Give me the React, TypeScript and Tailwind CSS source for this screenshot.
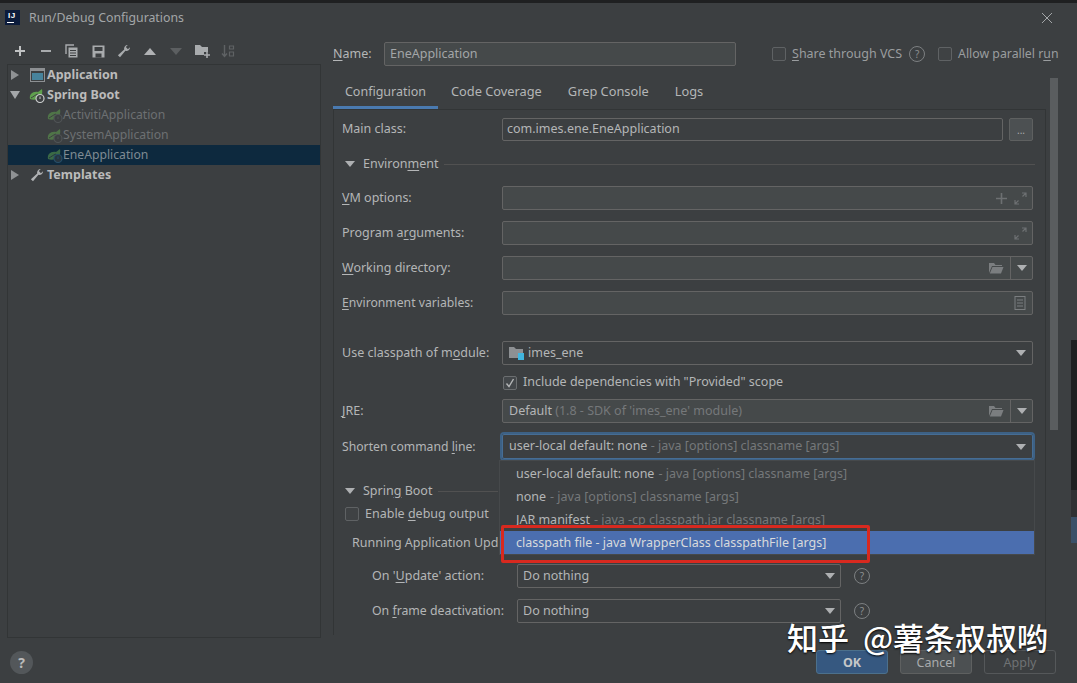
import React from "react";

const FONT = "font-['Noto_Sans','Liberation_Sans',sans-serif]";

function Help({ className = "" }: { className?: string }) {
  return (
    <span className={"flex h-[16px] w-[16px] shrink-0 items-center justify-center rounded-full border border-[#7d8082] text-[10px] text-[#8c8f91] " + className}>?</span>
  );
}

function Caret({ dim = false }: { dim?: boolean }) {
  return (
    <svg width="10" height="6" viewBox="0 0 10 6" className="shrink-0">
      <path d="M0 0H10L5 6Z" fill={dim ? "#8a8d8f" : "#aeb0b2"} />
    </svg>
  );
}

function Folder() {
  return (
    <svg width="16" height="14" viewBox="0 0 16 14" className="shrink-0">
      <path d="M1 2H6L7.5 4H14V5H4L1 12Z" fill="#7b7e80" />
      <path d="M4.5 6H15.5L13 12.5H1.8Z" fill="#7b7e80" />
    </svg>
  );
}

function Expand({ dim = false }: { dim?: boolean }) {
  return (
    <svg width="13" height="13" viewBox="0 0 13 13" className="shrink-0">
      <path d="M8 1H12V5M12 1L8.5 4.5M5 12H1V8M1 12L4.5 8.5" stroke={dim ? "#6d7072" : "#7b7e80"} strokeWidth="1.2" fill="none" />
    </svg>
  );
}

function Spring({ badge = "#5f6466", dim = false }: { badge?: string; dim?: boolean }) {
  return (
    <svg width="16" height="15" viewBox="0 0 16 15" className="shrink-0" style={{ opacity: dim ? 0.55 : 1 }}>
      <path d="M1 11C0 6 4 3 9 4L13 1C14 6 12 10 9 11C6 12 3 12 1 11Z" fill="#5fa04e" />
      <path d="M2 10C4 9 6 7 9 6" stroke="#3c3f41" strokeWidth="1" fill="none" />
      <circle cx="11" cy="10.5" r="4" fill="#3c3f41" stroke={dim ? badge : "#c8cacb"} strokeWidth="1.2" />
      <path d="M11 8.5V11" stroke={dim ? badge : "#c8cacb"} strokeWidth="1" />
    </svg>
  );
}

function Field({ w = "w-[531px]", h = "h-[24px]", bg = "bg-[#45494a]", children }: { w?: string; h?: string; bg?: string; children?: React.ReactNode }) {
  return (
    <div className={`${w} ${h} ${bg} flex shrink-0 items-center rounded-[2px] border border-[#646464]`}>
      {children}
    </div>
  );
}

function Row({ label, mt, children }: { label: React.ReactNode; mt: string; children: React.ReactNode }) {
  return (
    <div className={`flex items-center ${mt}`}>
      <div className="w-[160px] shrink-0">{label}</div>
      {children}
    </div>
  );
}

function DropSplit() {
  return (
    <>
      <span className="ml-auto mr-[6px] flex"><Folder /></span>
      <span className="flex h-full w-[22px] items-center justify-center border-l border-[#646464]"><Caret /></span>
    </>
  );
}

function Section({ title, mt, lineW }: { title: React.ReactNode; mt: string; lineW: string }) {
  return (
    <div className={`flex h-[16px] items-center pl-[3px] ${mt}`}>
      <Caret />
      <span className="ml-[8px]">{title}</span>
      <span className={`ml-[6px] h-px bg-[#515151] ${lineW}`} />
    </div>
  );
}

function ToolIcon({ children }: { children: React.ReactNode }) {
  return <span className="flex h-[20px] w-[26px] items-center justify-center">{children}</span>;
}

function TreeRow({ icon, text, arrow, bold, selected, indent, color }: { icon: React.ReactNode; text: string; arrow?: "r" | "d"; bold?: boolean; selected?: boolean; indent?: boolean; color?: string }) {
  return (
    <div className={`flex h-[20px] items-center ${selected ? "bg-[#0d293e]" : ""} ${indent ? "pl-[39px] text-[12.2px]" : "pl-[2px]"}`}>
      {arrow === "r" && (
        <svg width="10" height="10" viewBox="0 0 10 10" className="mr-[9px] shrink-0"><path d="M1 0L9 5L1 10Z" fill="#8f9294" /></svg>
      )}
      {arrow === "d" && (
        <svg width="10" height="10" viewBox="0 0 10 10" className="mr-[9px] shrink-0"><path d="M0 1H10L5 9Z" fill="#a4a7a9" /></svg>
      )}
      <span className="flex w-[16px] shrink-0 items-center justify-center">{icon}</span>
      <span className={`${indent ? "" : "ml-[2px]"} ${bold ? "font-bold text-[#bbbbbb]" : ""} ${color ?? ""}`}>{text}</span>
    </div>
  );
}

export default function App() {
  return (
    <div className={`relative flex h-[683px] w-[1077px] flex-col overflow-hidden bg-[#3c3f41] text-[12.5px] leading-[16px] text-[#b4b6b7] ${FONT}`}>
      <div className="h-[3px] shrink-0 bg-[#1f2021]" />

      {/* title bar */}
      <div className="flex h-[31px] shrink-0 items-center pb-[2px] pl-[5px] pr-[24px]">
        <div className="relative flex h-[15px] w-[15px] items-start justify-start bg-[#0c1c3c] pl-[3px] pt-[1px] font-['Liberation_Sans',sans-serif] text-[8px] font-bold leading-[9px] tracking-[0.5px] text-white">
          IJ
          <span className="absolute bottom-[2px] left-[2px] h-px w-[7px] bg-white" />
        </div>
        <span className="ml-[9px] text-[12.3px] text-[#a3a6a8]">Run/Debug Configurations</span>
        <svg width="12" height="12" viewBox="0 0 12 12" className="ml-auto">
          <path d="M1 1L11 11M11 1L1 11" stroke="#a3a6a8" strokeWidth="1" />
        </svg>
      </div>

      <div className="flex min-h-0 flex-1">
        {/* left column */}
        <div className="flex w-[333px] shrink-0 flex-col pl-[7px] pr-[12px]">
          <div className="-mr-[4px] flex h-[30px] items-start pt-[7px]">
            <ToolIcon><svg width="12" height="12" viewBox="0 0 12 12"><path d="M6 1V11M1 6H11" stroke="#c0c2c3" strokeWidth="2" /></svg></ToolIcon>
            <ToolIcon><svg width="12" height="12" viewBox="0 0 12 12"><path d="M1 6H11" stroke="#a8abad" strokeWidth="2" /></svg></ToolIcon>
            <ToolIcon>
              <svg width="14" height="14" viewBox="0 0 14 14"><path d="M1 10V1H9" stroke="#a8abad" strokeWidth="1.4" fill="none" /><rect x="3.5" y="3.5" width="9" height="10" fill="#a8abad" /><path d="M5 6.5H11M5 9H11M5 11.5H11" stroke="#3c3f41" strokeWidth="1" /></svg>
            </ToolIcon>
            <ToolIcon>
              <svg width="13" height="13" viewBox="0 0 13 13"><path d="M0.5 0.5H12.5V12.5H0.5Z" fill="#a8abad" /><rect x="2.5" y="2" width="8" height="4" fill="#3c3f41" /><rect x="3.5" y="8.5" width="6" height="4" fill="#3c3f41" /></svg>
            </ToolIcon>
            <ToolIcon>
              <svg width="14" height="14" viewBox="0 0 14 14"><path d="M13 3.2A3.6 3.6 0 0 1 8.4 6.8L3 13.2L0.9 11.2L7.2 5.6A3.6 3.6 0 0 1 10.8 1L8.8 3.1L10.9 5.2Z" fill="#a8abad" /></svg>
            </ToolIcon>
            <ToolIcon><svg width="12" height="7" viewBox="0 0 12 7"><path d="M0 7L6 0L12 7Z" fill="#b0b2b4" /></svg></ToolIcon>
            <ToolIcon><svg width="12" height="7" viewBox="0 0 12 7"><path d="M0 0L6 7L12 0Z" fill="#5c5f61" /></svg></ToolIcon>
            <ToolIcon>
              <svg width="15" height="14" viewBox="0 0 15 14"><path d="M0 1H5L7 3H13V8H9V11H0Z" fill="#a8abad" /><path d="M12 8V14M9 11H15" stroke="#a8abad" strokeWidth="1.6" /></svg>
            </ToolIcon>
            <ToolIcon>
              <svg width="14" height="14" viewBox="0 0 14 14"><path d="M3.5 1V12M1 9.5L3.5 12.5L6 9.5" stroke="#5f6264" strokeWidth="1.4" fill="none" /><path d="M8.5 2H12.5V5H8.5ZM8.5 8H12.5V12H8.5Z" stroke="#5f6264" strokeWidth="1.2" fill="none" /></svg>
            </ToolIcon>
          </div>
          <div className="min-h-0 flex-1 border border-[#323536]">
            <TreeRow arrow="r" bold text="Application" icon={
              <svg width="15" height="14" viewBox="0 0 15 14"><rect x="0.5" y="0.5" width="14" height="13" fill="none" stroke="#8d9093" /><rect x="0.5" y="0.5" width="14" height="2.5" fill="#8d9093" /><rect x="2" y="5" width="11" height="7" fill="#47839c" /></svg>
            } />
            <TreeRow arrow="d" bold text="Spring Boot" icon={<Spring />} />
            <TreeRow indent text="ActivitiApplication" color="text-[#6d7072]" icon={<Spring dim />} />
            <TreeRow indent text="SystemApplication" color="text-[#6d7072]" icon={<Spring dim />} />
            <TreeRow indent selected text="EneApplication" color="text-[#7f8b93]" icon={<Spring dim badge="#3a6a88" />} />
            <TreeRow arrow="r" bold text="Templates" icon={
              <svg width="14" height="14" viewBox="0 0 14 14"><path d="M13 3.2A3.6 3.6 0 0 1 8.4 6.8L3 13.2L0.9 11.2L7.2 5.6A3.6 3.6 0 0 1 10.8 1L8.8 3.1L10.9 5.2Z" fill="#b0b2b4" /></svg>
            } />
          </div>
        </div>

        {/* right column */}
        <div className="flex w-[727px] shrink-0 flex-col pt-[8px]">
          <div className="flex h-[24px] items-center">
            <span className="w-[51px] shrink-0"><u className="underline-offset-2">N</u>ame:</span>
            <Field w="w-[352px]"><span className="pl-[5px] text-[#a3a6a8]">EneApplication</span></Field>
            <span className="ml-[36px] h-[14px] w-[14px] shrink-0 rounded-[2px] border border-[#5f6264] bg-[#3f4244]" />
            <span className="ml-[6px] whitespace-nowrap text-[#9a9d9f]"><u className="underline-offset-2">S</u>hare through VCS</span>
            <Help className="ml-[7px]" />
            <span className="ml-[13px] h-[14px] w-[14px] shrink-0 rounded-[2px] border border-[#5f6264] bg-[#3f4244]" />
            <span className="ml-[6px] whitespace-nowrap text-[12.3px] text-[#9a9d9f]">Allow parallel r<u className="underline-offset-2">u</u>n</span>
          </div>

          <div className="mt-[12px] flex min-h-0 flex-1">
            <div className="flex w-[713px] shrink-0 flex-col">
              <div className="flex h-[31px] shrink-0 items-start">
                <div className="flex h-[31px] w-[105px] items-start justify-center border-b-[3px] border-[#4a7ab0] pt-[6px]">Configuration</div>
                <span className="ml-[13px] pt-[5px] text-[12.8px]">Code Coverage</span>
                <span className="ml-[26px] pt-[5px] text-[12.8px]">Grep Console</span>
                <span className="ml-[26px] pt-[5px] text-[12.8px]">Logs</span>
              </div>
              <div className="relative mb-[3px] flex-1 border-x border-t border-[#323536] pl-[8px] pt-[8px]">
                <Row mt="" label={<span className="-mt-[1px] block">Main class:</span>}>
                  <Field w="w-[501px]" h="h-[23px]" bg="bg-[#3c3f41]"><span className="-mt-[1px] pl-[4px]">com.imes.ene.EneApplication</span></Field>
                  <span className="ml-[6px] flex h-[23px] w-[24px] items-center justify-center rounded-[2px] border border-[#5e6060] bg-[#4c5052] text-[10px] text-[#a8abad]">...</span>
                </Row>

                <Section mt="mt-[15px]" lineW="w-[591px]" title={<>Environ<u className="underline-offset-2">m</u>ent</>} />

                <Row mt="mt-[14px]" label={<><u className="underline-offset-2">V</u>M options:</>}>
                  <Field>
                    <svg width="11" height="11" viewBox="0 0 11 11" className="ml-auto"><path d="M5.5 0V11M0 5.5H11" stroke="#6d7072" strokeWidth="1.6" /></svg>
                    <span className="ml-[7px] mr-[5px] flex"><Expand dim /></span>
                  </Field>
                </Row>
                <Row mt="mt-[11px]" label={<>Program a<u className="underline-offset-2">r</u>guments:</>}>
                  <Field><span className="ml-auto mr-[5px] flex"><Expand dim /></span></Field>
                </Row>
                <Row mt="mt-[11px]" label={<><u className="underline-offset-2">W</u>orking directory:</>}>
                  <Field><DropSplit /></Field>
                </Row>
                <Row mt="mt-[11px]" label={<span className="text-[12.2px]"><u className="underline-offset-2">E</u>nvironment variables:</span>}>
                  <Field>
                    <svg width="12" height="14" viewBox="0 0 12 14" className="ml-auto mr-[6px]"><rect x="1" y="0.5" width="10" height="13" fill="none" stroke="#7b7e80" /><path d="M3 4H9M3 7H9M3 10H9" stroke="#7b7e80" /></svg>
                  </Field>
                </Row>
                <Row mt="mt-[26px]" label={<>Use classpath of m<u className="underline-offset-2">o</u>dule:</>}>
                  <Field bg="bg-[#3c3f41]">
                    <span className="relative ml-[6px] flex">
                      <svg width="15" height="14" viewBox="0 0 15 14"><path d="M0 1H5L7 3H14V12H0Z" fill="#8d9093" /><rect x="9" y="7" width="6" height="7" fill="#40b6e0" /></svg>
                    </span>
                    <span className="ml-[4px]">imes_ene</span>
                    <span className="ml-auto mr-[6px] flex"><Caret /></span>
                  </Field>
                </Row>
                <div className="mt-[11px] flex h-[14px] items-center pl-[161px]">
                  <span className="flex h-[14px] w-[14px] items-center justify-center rounded-[2px] border border-[#6b6e70] bg-[#43474a]">
                    <svg width="10" height="10" viewBox="0 0 10 10"><path d="M1.5 5.5L4 8.5L8.5 1" stroke="#b4b6b7" strokeWidth="1.4" fill="none" /></svg>
                  </span>
                  <span className="-mt-[2px] ml-[6px] whitespace-nowrap">Include dependencies with "Provided" scope</span>
                </div>
                <Row mt="mt-[9px]" label={<><u className="underline-offset-2">J</u>RE:</>}>
                  <Field>
                    <span className="pl-[6px]">Default <span className="text-[#75787a]">(1.8 - SDK of 'imes_ene' module)</span></span>
                    <DropSplit />
                  </Field>
                </Row>
                <Row mt="mt-[11px]" label={<span className="text-[12.2px]">Shorten command <u className="underline-offset-2">l</u>ine:</span>}>
                  <div className="flex h-[25px] w-[531px] items-center rounded-[2px] border border-[#466d94] bg-[#3c3f41] pb-[2px] pl-[6px] outline-2 outline-[#3d6185]">
                    <span>user-local default: none <span className="text-[#75787a]">- java [options] classname [args]</span></span>
                    <span className="ml-auto mr-[6px] mt-[2px] flex"><Caret /></span>
                  </div>
                </Row>

                <Section mt="mt-[24px]" lineW="w-[60px]" title={<>Sprin<u className="underline-offset-2">g</u> Boot</>} />

                <div className="mt-[8px] flex h-[14px] items-center pl-[3px]">
                  <span className="h-[14px] w-[14px] rounded-[2px] border border-[#5f6264] bg-[#3f4244]" />
                  <span className="ml-[6px] whitespace-nowrap">Enable <u className="underline-offset-2">d</u>ebug output</span>
                </div>
                <div className="mt-[14px] h-[16px] pl-[10px]">Running Application Upd</div>
                <div className="mt-[13px] flex items-center pl-[30px]">
                  <span className="w-[145px] shrink-0">On '<u className="underline-offset-2">U</u>pdate' action:</span>
                  <div className="flex h-[24px] w-[324px] items-center rounded-[2px] border border-[#646464] pl-[5px]">Do nothing<span className="ml-auto mr-[5px] flex"><Caret /></span></div>
                  <Help className="ml-[13px]" />
                </div>
                <div className="mt-[11px] flex items-center pl-[30px]">
                  <span className="w-[145px] shrink-0 text-[12.3px]">On <u className="underline-offset-2">f</u>rame deactivation:</span>
                  <div className="flex h-[24px] w-[324px] items-center rounded-[2px] border border-[#646464] pl-[5px]">Do nothing<span className="ml-auto mr-[5px] flex"><Caret /></span></div>
                  <Help className="ml-[13px]" />
                </div>

                {/* popup */}
                <div className="absolute left-[165px] top-[350px] w-[536px] border border-[#46494b] bg-[#3c3f41] pt-[1px]">
                  <div className="flex h-[23px] items-center pl-[16px]">user-local default: none <span className="ml-[4px] text-[#75787a]">- java [options] classname [args]</span></div>
                  <div className="flex h-[23px] items-center pl-[16px]">none <span className="ml-[4px] text-[#75787a]">- java [options] classname [args]</span></div>
                  <div className="flex h-[23px] items-center pl-[16px]">JAR manifest <span className="ml-[4px] text-[#75787a]">- java -cp classpath.jar classname [args]</span></div>
                  <div className="flex h-[23px] items-center bg-[#4b6eaf] pl-[16px] text-[#d8dadc]">classpath file - java WrapperClass classpathFile [args]</div>
                </div>
                {/* red highlight */}
                <div className="absolute left-[167px] top-[415px] h-[38px] w-[369px] rounded-[2px] border-[3px] border-[#d8291f]" />
              </div>
            </div>
            <div className="ml-[4px] h-[352px] w-[8px] bg-[#5a5d5f]" />
          </div>
        </div>
      </div>

      {/* footer */}
      <div className="flex h-[45px] shrink-0 items-start pl-[10px] pt-[12px]">
        <span className="mt-[1px] flex h-[23px] w-[23px] items-center justify-center rounded-full bg-[#53575a] text-[14px] font-bold text-[#bbbbbb]">?</span>
        <button className="ml-[783px] h-[24px] w-[72px] rounded-[3px] border border-[#4c708c] bg-[#365880] pt-[1px] text-[12.5px] font-bold text-[#c5c7c8]">OK</button>
        <button className="ml-[12px] h-[24px] w-[72px] rounded-[3px] border border-[#5e6060] bg-[#4c5052] pt-[1px] text-[12.5px] text-[#a8abad]">Cancel</button>
        <button className="ml-[12px] h-[24px] w-[72px] rounded-[3px] border border-[#55585a] pt-[1px] text-[12.5px] text-[#6f7274]">Apply</button>
      </div>

      {/* window behind the dialog, visible at the right edge */}
      <div className="absolute right-0 top-[340px] flex h-[203px] w-[6px] flex-col">
        <div className="h-[150px] bg-[#1f2021]" />
        <div className="h-[27px] bg-[#2f3133]" />
        <div className="h-[26px] bg-[#3a5068]" />
      </div>

      {/* watermark */}
      <div className="absolute left-[787px] top-[621px] flex h-[31px] items-center whitespace-nowrap font-['Noto_Sans_CJK_SC',sans-serif] text-[31px] font-medium leading-[31px] text-white [text-shadow:0_1px_2px_#000]">
        <span>知乎</span>
        <span className="ml-[14px] inline-block w-[30px] text-center">@</span>
        <span>薯条叔叔哟</span>
      </div>
    </div>
  );
}
